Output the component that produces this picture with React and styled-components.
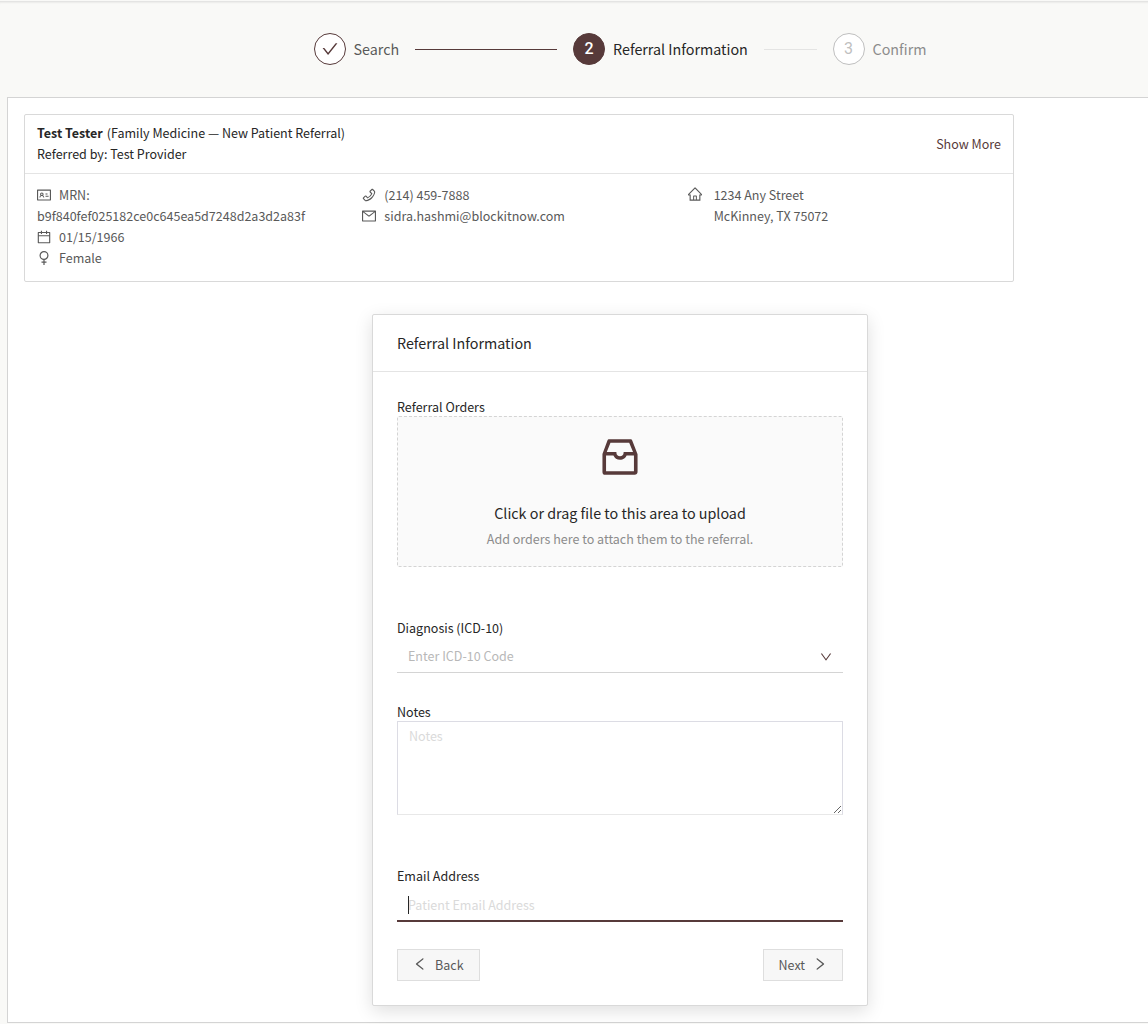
import React from "react";
import styled, { createGlobalStyle } from "styled-components";
import {
  AiOutlineCheck,
  AiOutlineIdcard,
  AiOutlineCalendar,
  AiOutlinePhone,
  AiOutlineMail,
  AiOutlineHome,
  AiOutlineInbox,
  AiOutlineDown,
  AiOutlineLeft,
  AiOutlineRight,
} from "react-icons/ai";

const brand = "#573a3a";
const tight = "64 64 896 896";

const GlobalStyle = createGlobalStyle`
  *, *::before, *::after { box-sizing: border-box; }
  body {
    margin: 0;
    background: #f9f9f7;
    color: #262626;
    font-family: "Source Sans Pro", "Noto Sans CJK SC", "Noto Sans", sans-serif;
    font-size: 14px;
    /* keeps the fallback families at the x-height of Source Sans */
    font-size-adjust: 0.486;
    line-height: 21px;
  }
  button, input, select, textarea {
    font: inherit;
    font-size-adjust: 0.486;
    color: inherit;
    margin: 0;
  }
`;

const Viewport = styled.div`
  overflow: hidden;
  padding-top: 1px;
`;

const Page = styled.div`
  min-width: 1240px;
  padding: 0 7px 1px;
  border-top: 1px solid #e4e4e3;
  box-shadow: inset 0 2px 2px -1px rgba(0, 0, 0, 0.06);
`;

const Steps = styled.ol`
  display: flex;
  width: 50%;
  margin: 0 auto;
  padding: 31px 0 32px;
  gap: 16px;
  list-style: none;
`;

const Step = styled.li`
  display: flex;
  align-items: center;
  flex: ${(p) => (p.$last ? "none" : "1")};
  font-size: 16px;
  line-height: 32px;
  color: ${(p) => ({ done: "#595959", active: "#262626", wait: "#8c8c8c" })[p.$state]};
`;

const StepIcon = styled.span`
  display: flex;
  align-items: center;
  justify-content: center;
  width: 32px;
  height: 32px;
  margin-right: 8px;
  border: 1px solid ${(p) => (p.$state === "wait" ? "#bfbfbf" : brand)};
  border-radius: 50%;
  background: ${(p) => (p.$state === "active" ? brand : "#fff")};
  color: ${(p) => ({ done: brand, active: "#fff", wait: "#bfbfbf" })[p.$state]};
  font-family: Roboto, sans-serif;
  font-size: 16px;
  font-size-adjust: none;
  font-weight: ${(p) => (p.$state === "active" ? 500 : 400)};
`;

const StepLine = styled.span`
  flex: 1;
  height: 1px;
  margin-left: 16px;
  background: ${(p) => (p.$done ? brand : "#e4e4e3")};
`;

const Panel = styled.main`
  padding: 16px;
  border: 1px solid #d4d4d4;
  background: #fff;
`;

const Summary = styled.section`
  max-width: 990px;
  border: 1px solid #d9d9d9;
  border-radius: 2px;
`;

const SummaryHead = styled.header`
  display: flex;
  align-items: center;
  justify-content: space-between;
  padding: 7px 12px 9px;
  border-bottom: 1px solid #e4e4e4;
`;

const PatientName = styled.strong`
  margin-right: 4px;
  font-weight: 700;
`;

const LinkButton = styled.button`
  padding: 0;
  border: 0;
  background: none;
  color: ${brand};
  cursor: pointer;
`;

const SummaryBody = styled.div`
  display: grid;
  grid-template-columns: repeat(3, 1fr);
  column-gap: 12px;
  padding: 10px 12px 13px;
  color: #595959;
`;

const Detail = styled.div`
  svg {
    width: 14px;
    height: 14px;
    margin-right: 8px;
    vertical-align: -2px;
  }
`;

const Address = styled.address`
  display: flex;
  gap: 12px;
  font-style: normal;
  svg {
    width: 14px;
    height: 14px;
    margin-top: 3px;
  }
`;

const Card = styled.form`
  width: 496px;
  margin: 32px auto 0;
  border: 1px solid #d9d9d9;
  border-radius: 2px;
  background: #fff;
  box-shadow: 0 5px 18px rgba(0, 0, 0, 0.13);
`;

const CardTitle = styled.h1`
  margin: 0;
  padding: 16px 24px;
  border-bottom: 1px solid #e4e4e4;
  font-size: 16px;
  font-weight: 400;
  line-height: 24px;
`;

const CardBody = styled.div`
  padding: 26px 24px 24px;
`;

const Field = styled.div`
  display: flex;
  flex-direction: column;
  gap: ${(p) => (p.$boxed ? "0" : "4px")};
  margin-bottom: ${(p) => (p.$boxed ? "52px" : "30px")};
  &:nth-last-of-type(2) { margin-bottom: 27px; }
`;

const Label = styled.label`
  line-height: 18px;
`;

const HiddenFile = styled.input`
  position: absolute;
  width: 1px;
  height: 1px;
  opacity: 0;
`;

const DropZone = styled.label`
  display: flex;
  flex-direction: column;
  align-items: center;
  padding: 16px 16px 17px;
  border: 1px dashed #d4d4d4;
  border-radius: 2px;
  background: #fafafa;
  cursor: pointer;
  svg {
    width: 48px;
    height: 48px;
    margin-bottom: 20px;
    color: ${brand};
  }
`;

const DropTitle = styled.span`
  margin-bottom: 3px;
  font-size: 16px;
  line-height: 24px;
`;

const DropHint = styled.span`
  color: #8c8c8c;
`;

const Control = styled.div`
  position: relative;
  display: flex;
`;

const Select = styled.select`
  flex: 1;
  height: 32px;
  padding: 0 32px 2px 11px;
  border: 0;
  border-bottom: 1px solid #d4d4d4;
  border-radius: 0;
  background: none;
  color: #b8b8b8;
  appearance: none;
  outline: none;
`;

const SelectArrow = styled(AiOutlineDown)`
  position: absolute;
  top: 10px;
  right: 11px;
  width: 12px;
  height: 12px;
  color: ${brand};
  pointer-events: none;
`;

const TextArea = styled.textarea`
  height: 94px;
  padding: 3px 11px;
  border: 1px solid #dcdce4;
  border-bottom-color: #e8e8e8;
  background: #fff;
  outline: none;
  resize: vertical;
  &::placeholder { color: #dadada; opacity: 1; }
`;

const Input = styled.input`
  flex: 1;
  height: 33px;
  padding: 0 11px;
  border: 0;
  border-bottom: 2px solid ${brand};
  background: none;
  outline: none;
  &::placeholder { color: #dadada; opacity: 1; }
`;

const Caret = styled.span`
  position: absolute;
  top: 7px;
  left: 11px;
  width: 1px;
  height: 18px;
  background: #262626;
`;

const Actions = styled.div`
  display: flex;
  justify-content: space-between;
`;

const NavButton = styled.button`
  display: flex;
  align-items: center;
  gap: 8px;
  height: 32px;
  padding: 0 15px 2px;
  border: 1px solid #dedede;
  background: #f7f7f7;
  color: #595959;
  cursor: pointer;
  svg {
    width: 14px;
    height: 14px;
  }
`;

const FemaleIcon = () => (
  <svg viewBox="0 0 14 14" fill="none" stroke="currentColor" strokeWidth="1.2" aria-hidden="true">
    <circle cx="7" cy="4.5" r="3.9" />
    <path d="M7 8.4V14M4.5 11.2h5" />
  </svg>
);

export default function App() {
  return (
    <Viewport>
      <GlobalStyle />
      <Page>
        <Steps>
          <Step $state="done">
            <StepIcon $state="done"><AiOutlineCheck viewBox={tight} /></StepIcon>
            Search
            <StepLine $done />
          </Step>
          <Step $state="active" aria-current="step">
            <StepIcon $state="active">2</StepIcon>
            Referral Information
            <StepLine />
          </Step>
          <Step $state="wait" $last>
            <StepIcon $state="wait">3</StepIcon>
            Confirm
          </Step>
        </Steps>

        <Panel>
          <Summary>
            <SummaryHead>
              <div>
                <div>
                  <PatientName>Test Tester</PatientName>
                  (Family Medicine — New Patient Referral)
                </div>
                <div>Referred by: Test Provider</div>
              </div>
              <LinkButton type="button">Show More</LinkButton>
            </SummaryHead>
            <SummaryBody>
              <div>
                <Detail><AiOutlineIdcard viewBox={tight} />MRN: b9f840fef025182ce0c645ea5d7248d2a3d2a83f</Detail>
                <Detail><AiOutlineCalendar viewBox={tight} />01/15/1966</Detail>
                <Detail><FemaleIcon />Female</Detail>
              </div>
              <div>
                <Detail><AiOutlinePhone viewBox={tight} />(214) 459-7888</Detail>
                <Detail><AiOutlineMail viewBox={tight} />sidra.hashmi@blockitnow.com</Detail>
              </div>
              <Address>
                <AiOutlineHome viewBox={tight} />
                <div>
                  <div>1234 Any Street</div>
                  <div>McKinney, TX 75072</div>
                </div>
              </Address>
            </SummaryBody>
          </Summary>

          <Card>
            <CardTitle>Referral Information</CardTitle>
            <CardBody>
              <Field $boxed>
                <Label htmlFor="orders">Referral Orders</Label>
                <HiddenFile id="orders" type="file" />
                <DropZone htmlFor="orders">
                  <AiOutlineInbox />
                  <DropTitle>Click or drag file to this area to upload</DropTitle>
                  <DropHint>Add orders here to attach them to the referral.</DropHint>
                </DropZone>
              </Field>
              <Field>
                <Label htmlFor="diagnosis">Diagnosis (ICD-10)</Label>
                <Control>
                  <Select id="diagnosis" defaultValue="">
                    <option value="">Enter ICD-10 Code</option>
                  </Select>
                  <SelectArrow viewBox={tight} />
                </Control>
              </Field>
              <Field $boxed>
                <Label htmlFor="notes">Notes</Label>
                <TextArea id="notes" placeholder="Notes" />
              </Field>
              <Field>
                <Label htmlFor="email">Email Address</Label>
                <Control>
                  <Input id="email" type="email" placeholder="Patient Email Address" />
                  <Caret aria-hidden="true" />
                </Control>
              </Field>
              <Actions>
                <NavButton type="button"><AiOutlineLeft viewBox={tight} />Back</NavButton>
                <NavButton type="button">Next<AiOutlineRight viewBox={tight} /></NavButton>
              </Actions>
            </CardBody>
          </Card>
        </Panel>
      </Page>
    </Viewport>
  );
}
